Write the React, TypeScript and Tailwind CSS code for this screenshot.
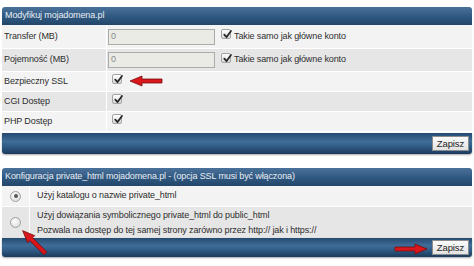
import React from 'react';

const headerBg = 'bg-[linear-gradient(to_bottom,#4a719a,#2f5880_55%,#234669)]';
const footerBg = 'bg-[linear-gradient(to_bottom,#254a70,#3f6d98_40%,#2f5b85_65%,#1c3a5c)]';

const Check: React.FC = () => (
  <span className="relative inline-block w-[10px] h-[10px] rounded-[2px] border border-[#a3a3a3] bg-[linear-gradient(to_bottom,#ffffff,#d9d9d9)] shrink-0">
    <svg viewBox="0 0 12 12" className="absolute left-[0px] top-[-1px] w-[11px] h-[11px]">
      <path d="M2.5 6.2 L5 8.8 L9.8 2.2" fill="none" stroke="#262626" strokeWidth="1.9" strokeLinecap="round" strokeLinejoin="round" />
    </svg>
  </span>
);

const Radio: React.FC<{ on?: boolean }> = ({ on }) => (
  <span className="flex items-center justify-center w-[11px] h-[11px] rounded-full border border-[#a0a0a0] bg-[radial-gradient(circle_at_40%_35%,#ffffff,#d4d4d4)]">
    {on && <span className="w-[4px] h-[4px] rounded-full bg-[#555]" />}
  </span>
);

const ArrowRight: React.FC<{ className?: string }> = ({ className }) => (
  <svg viewBox="0 0 34 12" className={className}>
    <path d="M1 4 H21 V1 L33 6 L21 11 V8 H1 Z" fill="#d9161b" stroke="#7a0c0c" strokeWidth="0.8" strokeLinejoin="round" />
  </svg>
);

const ArrowLeft: React.FC<{ className?: string }> = ({ className }) => (
  <svg viewBox="0 0 34 12" className={className}>
    <path d="M33 4 H13 V1 L1 6 L13 11 V8 H33 Z" fill="#d9161b" stroke="#7a0c0c" strokeWidth="0.8" strokeLinejoin="round" />
  </svg>
);

const SaveButton: React.FC = () => (
  <button className="h-[15px] w-[37px] border border-[#8c8c8c] bg-[linear-gradient(to_bottom,#fbfbfb,#e2e2e2)] text-[9.5px] leading-none text-[#1e1e1e]">
    Zapisz
  </button>
);

const Row: React.FC<{ label: string; dark?: boolean; h: string; children: React.ReactNode }> = ({ label, dark, h, children }) => (
  <div className={`flex border-b border-white ${h} ${dark ? 'bg-[#e6e6e6]' : 'bg-[#f3f3f3]'}`}>
    <div className="w-[105px] pl-[2px] flex items-center border-r border-white">{label}</div>
    <div className="flex-1 flex items-center pl-[1px]">{children}</div>
  </div>
);

const Limit: React.FC = () => (
  <div className="flex items-center">
    <div className="w-[107px] h-[16px] border border-[#ababab] bg-[#ebebe5] text-[#8a8a8a] pl-[2px] flex items-center">0</div>
    <span className="ml-[6px]"><Check /></span>
    <span className="ml-[3px]">Takie samo jak główne konto</span>
  </div>
);

export default function App() {
  return (
    <div className="relative w-[474px] h-[266px] overflow-hidden bg-white pt-[7px] font-['Liberation_Sans',Arial,sans-serif] text-[9px] tracking-[-0.12px] text-[#2e2e2e]">
      <div className="mx-[2px]">
        {/* Sekcja 1 */}
        <div className={`h-[18px] rounded-t-[3px] ${headerBg} text-[#e9eef4] pl-[3px] flex items-center`}>
          Modyfikuj mojadomena.pl
        </div>
        <Row label="Transfer (MB)" h="h-[24px]"><Limit /></Row>
        <Row label="Pojemność (MB)" dark h="h-[23px]"><Limit /></Row>
        <Row label="Bezpieczny SSL" h="h-[20px]"><span className="ml-[4px]"><Check /></span></Row>
        <Row label="CGI Dostęp" dark h="h-[20px]"><span className="ml-[4px]"><Check /></span></Row>
        <Row label="PHP Dostęp" h="h-[20px]"><span className="ml-[4px]"><Check /></span></Row>
        <div className={`mt-[1px] h-[21px] rounded-b-[3px] ${footerBg} shadow-[0_1px_2px_rgba(0,0,0,0.35)] flex items-center justify-end pr-[3px]`}>
          <SaveButton />
        </div>

        {/* Sekcja 2 */}
        <div className={`mt-[14px] h-[18px] rounded-t-[3px] ${headerBg} text-[#e9eef4] pl-[3px] flex items-center`}>
          Konfiguracja private_html mojadomena.pl - (opcja SSL musi być włączona)
        </div>
        <div className="flex h-[21px] bg-[#f3f3f3] border-b border-white">
          <div className="w-[28px] flex items-center justify-center border-r border-white"><Radio on /></div>
          <div className="flex-1 flex items-center pl-[7px]">Użyj katalogu o nazwie private_html</div>
        </div>
        <div className="flex h-[31px] bg-[#e6e6e6]">
          <div className="w-[28px] flex items-center justify-center border-r border-white"><Radio /></div>
          <div className="flex-1 flex flex-col justify-center pl-[7px] leading-[15px]">
            <span>Użyj dowiązania symbolicznego private_html do public_html</span>
            <span>Pozwala na dostęp do tej samej strony zarówno przez http:// jak i https://</span>
          </div>
        </div>
        <div className={`h-[19px] rounded-b-[3px] ${footerBg} shadow-[0_1px_2px_rgba(0,0,0,0.35)] flex items-center justify-end pr-[3px]`}>
          <SaveButton />
        </div>
      </div>

      {/* Strzałki */}
      <ArrowLeft className="absolute left-[129px] top-[75px] w-[34px] h-[12px]" />
      <ArrowRight className="absolute left-[394px] top-[243px] w-[34px] h-[12px]" />
      <svg viewBox="0 0 32 32" className="absolute left-[18px] top-[226px] w-[32px] h-[32px]">
        <g transform="translate(16 16) rotate(225) translate(-17 -6)">
          <path d="M1 4 H21 V1 L33 6 L21 11 V8 H1 Z" fill="#d9161b" stroke="#7a0c0c" strokeWidth="0.8" strokeLinejoin="round" />
        </g>
      </svg>
    </div>
  );
}
